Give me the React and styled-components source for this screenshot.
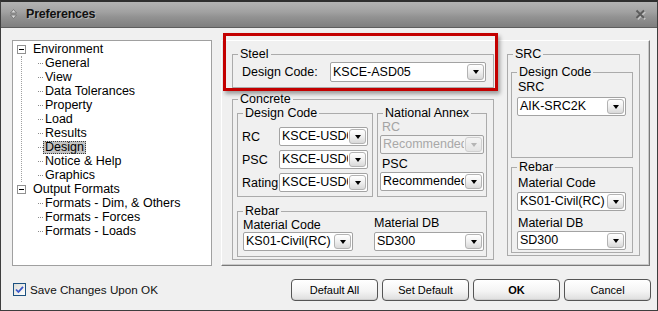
import React from 'react'
import styled, { createGlobalStyle } from 'styled-components'

const GlobalStyle = createGlobalStyle`
    html, body {
        margin: 0;
        padding: 0;
        background: #ffffff;
    }
    body {
        font-family: "Liberation Sans", Arial, sans-serif;
    }
`;

const FONT = `"Liberation Sans", Arial, sans-serif`;

function Combo({ value, width, height = 19, disabled }) {
    return (
        <ComboBox $w={width} $h={height} $disabled={disabled}>
            <ComboText $h={height} $disabled={disabled}>{value}</ComboText>
            <DropButton $disabled={disabled} />
        </ComboBox>
    )
}

function TreeNode({ label, open }) {
    return (
        <NodeRow>
            <Expander $open={open} />
            <NodeLabel>{label}</NodeLabel>
        </NodeRow>
    )
}

function TreeLeaf({ label, selected }) {
    return (
        <LeafRow>
            <Stub />
            <NodeLabel $selected={selected}>{label}</NodeLabel>
        </LeafRow>
    )
}

function App() {
    const envItems = ['General', 'View', 'Data Tolerances', 'Property', 'Load', 'Results', 'Design', 'Notice & Help', 'Graphics']
    const outItems = ['Formats - Dim, & Others', 'Formats - Forces', 'Formats - Loads']

    return (
        <>
        <GlobalStyle />
        <Window>
            <TitleBar>
                <TitleIcon width="7" height="10" viewBox="0 0 7 10">
                    <path d="M3.5 0.5 L6.5 4 L0.5 4 Z" fill="#dcdcdc" stroke="#6a6a6a" strokeWidth="0.8" />
                    <path d="M3.5 9.5 L6.5 6 L0.5 6 Z" fill="#dcdcdc" stroke="#6a6a6a" strokeWidth="0.8" />
                </TitleIcon>
                <TitleText>Preferences</TitleText>
                <CloseIcon width="11" height="11" viewBox="0 0 11 11">
                    <path d="M2 2 L9.5 9.5 M9.5 2 L2 9.5" stroke="#c4c4c4" strokeWidth="2" transform="translate(0.6 0.8)" />
                    <path d="M1.5 1.5 L9 9 M9 1.5 L1.5 9" stroke="#5c5c5c" strokeWidth="2" />
                </CloseIcon>
            </TitleBar>

            <MainRow>
                <TreeBox>
                    <TreeNode label="Environment" open />
                    <Branch $line>
                        {envItems.map(item => (
                            <TreeLeaf key={item} label={item} selected={item === 'Design'} />
                        ))}
                    </Branch>
                    <TreeNode label="Output Formats" open />
                    <Branch>
                        {outItems.map(item => (
                            <TreeLeaf key={item} label={item} />
                        ))}
                    </Branch>
                </TreeBox>

                <Panel>
                    <LeftColumn>
                        <Group>
                            <Legend>Steel</Legend>
                            <InlineField>
                                <FieldLabel $w={88}>Design Code:</FieldLabel>
                                <Combo value="KSCE-ASD05" width={156} height={20} />
                            </InlineField>
                        </Group>

                        <Group>
                            <Legend>Concrete</Legend>
                            <ConcreteBody>
                                <SubRow>
                                    <Group $w={136}>
                                        <Legend>Design Code</Legend>
                                        <CodeGrid>
                                            <FieldLabel>RC</FieldLabel>
                                            <Combo value="KSCE-USD05" width={89} />
                                            <FieldLabel>PSC</FieldLabel>
                                            <Combo value="KSCE-USD05" width={89} />
                                            <FieldLabel>Rating</FieldLabel>
                                            <Combo value="KSCE-USD05" width={89} />
                                        </CodeGrid>
                                    </Group>
                                    <Group $w={110}>
                                        <Legend>National Annex</Legend>
                                        <StackBody $pad="0 4px 4px 2px">
                                            <FieldLabel $pl={2} $lh={15} $disabled>RC</FieldLabel>
                                            <Combo value="Recommended" width={104} disabled />
                                            <FieldLabel $pl={2} $lh={15} $mt={3}>PSC</FieldLabel>
                                            <Combo value="Recommended" width={104} />
                                        </StackBody>
                                    </Group>
                                </SubRow>

                                <Group>
                                    <Legend>Rebar</Legend>
                                    <RebarBody>
                                        <FieldStack>
                                            <FieldLabel>Material Code</FieldLabel>
                                            <Combo value="KS01-Civil(RC)" width={110} />
                                        </FieldStack>
                                        <FieldStack>
                                            <FieldLabel $mt={-2} $mb={2}>Material DB</FieldLabel>
                                            <Combo value="SD300" width={110} />
                                        </FieldStack>
                                    </RebarBody>
                                </Group>
                            </ConcreteBody>
                        </Group>
                    </LeftColumn>

                    <Group $w={133}>
                        <Legend>SRC</Legend>
                        <SrcBody>
                            <Group>
                                <Legend>Design Code</Legend>
                                <StackBody $pad="1px 0 0 5px" $minH={78}>
                                    <FieldLabel $pl={1} $mb={3}>SRC</FieldLabel>
                                    <Combo value="AIK-SRC2K" width={109} />
                                </StackBody>
                            </Group>
                            <Group>
                                <Legend>Rebar</Legend>
                                <StackBody $pad="2px 0 2px 5px">
                                    <FieldLabel $pl={1} $mb={2}>Material Code</FieldLabel>
                                    <Combo value="KS01-Civil(RC)" width={109} />
                                    <FieldLabel $pl={1} $mt={5} $mb={1}>Material DB</FieldLabel>
                                    <Combo value="SD300" width={109} />
                                </StackBody>
                            </Group>
                        </SrcBody>
                    </Group>

                    <Highlight />
                </Panel>
            </MainRow>

            <Footer>
                <CheckRow>
                    <CheckBox>
                        <svg width="9" height="9" viewBox="0 0 9 9">
                            <path d="M1 4.5 L3.4 7 L8 1.8" fill="none" stroke="#3a56c8" strokeWidth="1.8" />
                        </svg>
                    </CheckBox>
                    <CheckText>Save Changes Upon OK</CheckText>
                </CheckRow>
                <ButtonRow>
                    <Button>Default All</Button>
                    <Button>Set Default</Button>
                    <Button $bold>OK</Button>
                    <Button>Cancel</Button>
                </ButtonRow>
            </Footer>
        </Window>
        </>
    )
}

const Window = styled.div`
    width: 658px;
    height: 311px;
    box-sizing: border-box;
    border: 1px solid #3e3e3e;
    border-top: 2px solid #2e2e2e;
    background: #f0f0f0;
    display: flex;
    flex-direction: column;
    font-family: ${FONT};
    font-size: 12.5px;
    color: #000;
    overflow: hidden;
`;

const TitleBar = styled.div`
    height: 26px;
    box-sizing: border-box;
    flex-shrink: 0;
    display: flex;
    align-items: center;
    padding: 0 11px 1px 9px;
    background: linear-gradient(to bottom, #b3b3b3 0%, #a1a1a1 40%, #929292 60%, #7f7f7f 100%);
    border-bottom: 1px solid #5e5e5e;
`;

const TitleIcon = styled.svg`
    margin-right: 9px;
`;

const TitleText = styled.div`
    flex: 1;
    font-weight: bold;
    font-size: 12.5px;
    color: #111;
    text-shadow: 1px 1px 0 rgba(255, 255, 255, 0.3);
    letter-spacing: -0.2px;
`;

const CloseIcon = styled.svg`
    margin-top: 1px;
`;

const MainRow = styled.div`
    display: flex;
    gap: 9px;
    height: 226px;
    flex-shrink: 0;
    padding: 12px 7px 0 11px;
`;

const TreeBox = styled.div`
    width: 200px;
    box-sizing: border-box;
    border: 1px solid #a0a0a0;
    background: #fff;
    padding-top: 1px;
`;

const NodeRow = styled.div`
    display: flex;
    align-items: center;
    height: 14px;
    padding-left: 4px;
    white-space: nowrap;
`;

const Expander = styled.span`
    width: 9px;
    height: 9px;
    box-sizing: border-box;
    border: 1px solid #919191;
    background: #fff;
    margin-right: 5px;
    display: flex;
    align-items: center;
    justify-content: center;
    &::after {
        content: '';
        width: 5px;
        height: 1px;
        background: #000;
    }
`;

const Branch = styled.div`
    margin-left: 8px;
    border-left: 1px dotted ${p => p.$line ? '#a0a0a0' : 'transparent'};
`;

const LeafRow = styled.div`
    display: flex;
    align-items: center;
    height: 14px;
    padding-left: 16px;
    white-space: nowrap;
`;

const Stub = styled.span`
    width: 5px;
    border-top: 1px dotted #8a8a8a;
`;

const NodeLabel = styled.span`
    padding: 0 2px;
    line-height: 13px;
    background: ${p => p.$selected ? '#c3c3c3' : 'transparent'};
    outline: ${p => p.$selected ? '1px dotted #3a3a3a' : 'none'};
    outline-offset: -1px;
`;

const Panel = styled.div`
    position: relative;
    width: 429px;
    box-sizing: border-box;
    border-style: solid;
    border-width: 1px;
    border-color: #ffffff #7a7a7a #7a7a7a #ffffff;
    box-shadow: inset -1px -1px 0 #c9c9c9;
    padding: 6px 8px 0 10px;
    display: grid;
    grid-template-columns: 262px 133px;
    column-gap: 13px;
    align-items: start;
`;

const LeftColumn = styled.div`
    display: flex;
    flex-direction: column;
    gap: 4px;
`;

const Group = styled.fieldset`
    margin: 0;
    padding: 0;
    min-width: 0;
    box-sizing: border-box;
    width: ${p => p.$w ? `${p.$w}px` : 'auto'};
    border: 1px solid #ababab;
`;

const Legend = styled.legend`
    margin-left: 5px;
    padding: 0 2px;
    font-size: 12.5px;
    line-height: 14px;
`;

const InlineField = styled.div`
    display: flex;
    align-items: center;
    padding: 1px 7px 5px 9px;
`;

const FieldLabel = styled.div`
    width: ${p => p.$w ? `${p.$w}px` : 'auto'};
    line-height: ${p => p.$lh || 14}px;
    padding-left: ${p => p.$pl || 0}px;
    margin-top: ${p => p.$mt || 0}px;
    margin-bottom: ${p => p.$mb || 0}px;
    color: ${p => p.$disabled ? '#a3a3a3' : '#000'};
    white-space: nowrap;
`;

const ConcreteBody = styled.div`
    display: flex;
    flex-direction: column;
    gap: 7px;
    padding: 0 6px 2px 4px;
`;

const SubRow = styled.div`
    display: flex;
    gap: 4px;
`;

const CodeGrid = styled.div`
    display: grid;
    grid-template-columns: 37px 89px;
    row-gap: 4px;
    align-items: center;
    padding: 7px 3px 4px 4px;
`;

const StackBody = styled.div`
    display: flex;
    flex-direction: column;
    padding: ${p => p.$pad};
    min-height: ${p => p.$minH ? `${p.$minH}px` : 'auto'};
    box-sizing: border-box;
`;

const RebarBody = styled.div`
    display: flex;
    gap: 21px;
    padding: 0 0 5px 5px;
`;

const FieldStack = styled.div`
    display: flex;
    flex-direction: column;
`;

const SrcBody = styled.div`
    display: flex;
    flex-direction: column;
    gap: 2px;
    padding: 4px 6px 2px 3px;
`;

const ComboBox = styled.div`
    display: flex;
    width: ${p => p.$w}px;
    height: ${p => p.$h}px;
    box-sizing: border-box;
    border: 1px solid #a3a3a3;
    border-radius: 2px;
    background: ${p => p.$disabled ? '#f3f3f3' : '#ffffff'};
`;

const ComboText = styled.span`
    flex: 1;
    min-width: 0;
    overflow: hidden;
    white-space: nowrap;
    padding-left: 2px;
    line-height: ${p => p.$h - 2}px;
    color: ${p => p.$disabled ? '#a8a8a8' : '#000'};
`;

const DropButton = styled.span`
    width: 17px;
    flex-shrink: 0;
    margin: 1px;
    box-sizing: border-box;
    border: 1px solid ${p => p.$disabled ? '#cfcfcf' : '#b3b3b3'};
    border-radius: 3px;
    background: ${p => p.$disabled
        ? 'linear-gradient(to bottom, #f4f4f4, #e4e4e4)'
        : 'linear-gradient(to bottom, #ffffff 0%, #f0f0f0 50%, #d9d9d9 100%)'};
    display: flex;
    align-items: center;
    justify-content: center;
    &::after {
        content: '';
        border-left: 3.5px solid transparent;
        border-right: 3.5px solid transparent;
        border-top: 4px solid ${p => p.$disabled ? '#b5b5b5' : '#000'};
    }
`;

const Highlight = styled.div`
    position: absolute;
    left: 1px;
    top: -8px;
    width: 275px;
    height: 58px;
    box-sizing: border-box;
    border: 3px solid #c30000;
    box-shadow: 2px 3px 4px rgba(0, 0, 0, 0.35);
    pointer-events: none;
`;

const Footer = styled.div`
    flex: 1;
    display: flex;
    align-items: center;
    justify-content: space-between;
    padding: 3px 6px 0 12px;
`;

const CheckRow = styled.label`
    display: flex;
    align-items: center;
    gap: 4px;
`;

const CheckBox = styled.span`
    width: 13px;
    height: 13px;
    box-sizing: border-box;
    border: 1px solid #1c5180;
    background: linear-gradient(135deg, #dcdcd7, #ffffff);
    display: flex;
    align-items: center;
    justify-content: center;
`;

const CheckText = styled.span`
    font-size: 11.7px;
    color: #111;
`;

const ButtonRow = styled.div`
    display: flex;
    gap: 4px;
`;

const Button = styled.button`
    width: 87px;
    height: 22px;
    box-sizing: border-box;
    padding: 0;
    border: 1px solid #555;
    border-radius: 4px;
    background: linear-gradient(to bottom, #ffffff 0%, #f4f4f4 55%, #dedede 100%);
    box-shadow: inset 0 -1px 0 #cfcfcf;
    font-family: ${FONT};
    font-size: 11px;
    font-weight: ${p => p.$bold ? 'bold' : 'normal'};
    color: #000;
`;

export default App
